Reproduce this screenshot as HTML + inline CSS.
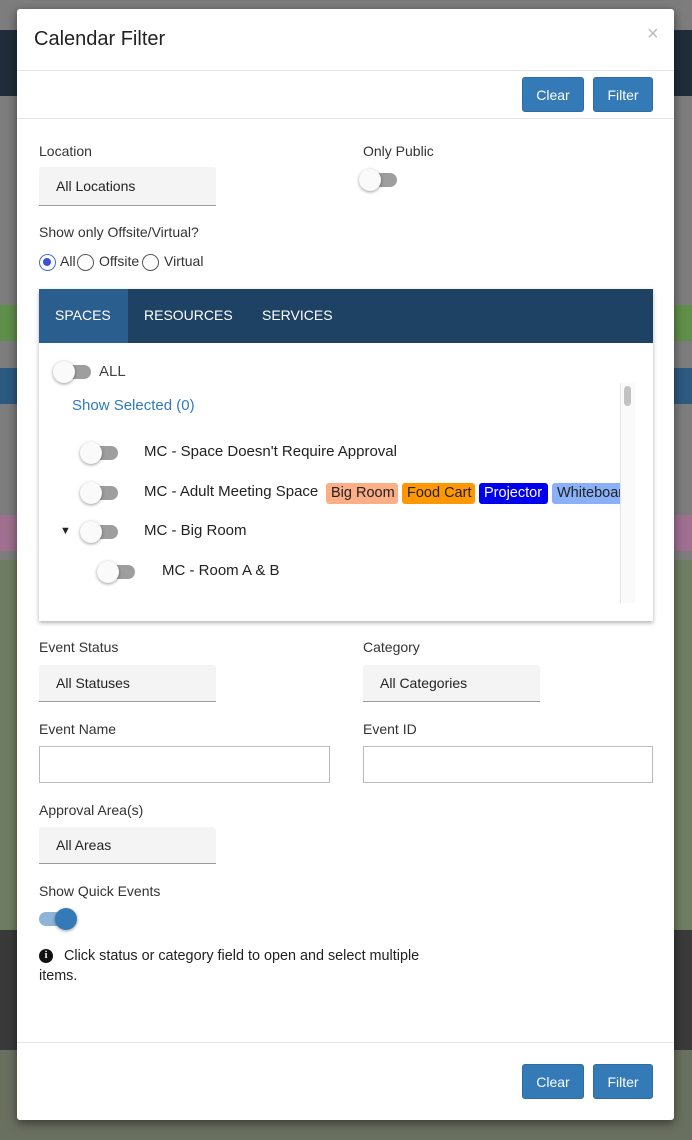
<!DOCTYPE html>
<html><head><meta charset="utf-8"><style>
*{box-sizing:border-box;margin:0;padding:0}
body{width:692px;height:1140px;overflow:hidden;background:#7d7d7d;font-family:"Liberation Sans",sans-serif;position:relative;color:#222}
.a{position:absolute}
.modal{position:absolute;left:17px;top:9px;width:657px;height:1111px;background:#fff;border-radius:3px;box-shadow:0 3px 10px rgba(0,0,0,.5)}
.lbl{position:absolute;font-size:14px;color:#333}
.sel{position:absolute;background:#f4f4f4;border-bottom:1px solid #999;font-size:14px;color:#222;padding-left:17px;display:flex;align-items:center;border-radius:3px 3px 0 0}
.btn{position:absolute;background:#337ab7;color:#fff;font-size:14px;border:1px solid #2e6da4;border-radius:3px;display:flex;align-items:center;justify-content:center}
.tg{position:absolute;width:38px;height:24px}
.tg .tr{position:absolute;left:6px;top:5px;width:32px;height:14px;border-radius:7px;background:#9e9e9e}
.tg .kn{position:absolute;left:0;top:1px;width:22px;height:22px;border-radius:50%;background:#fafafa;box-shadow:0 1px 3px rgba(0,0,0,.4)}
.row{position:absolute;font-size:15px;color:#222}
.tag{position:absolute;top:483px;height:21px;font-size:14.5px;border-radius:3px;padding:2px 5px;line-height:17px;white-space:nowrap;overflow:hidden}
.inp{position:absolute;border:1px solid #bbb;height:37px}
.radio{position:absolute;width:17px;height:17px;border-radius:50%;border:1.5px solid #555;top:254px}
</style></head><body>
<div class="a" style="left:0;top:30px;width:692px;height:66px;background:#1f2d3a"></div>
<div class="a" style="left:0;top:305px;width:692px;height:36px;background:#5f8f4a"></div>
<div class="a" style="left:0;top:368px;width:692px;height:36px;background:#2d5a80"></div>
<div class="a" style="left:0;top:515px;width:692px;height:36px;background:#a07090"></div>
<div class="a" style="left:0;top:560px;width:692px;height:370px;background:#6f7e62"></div>
<div class="a" style="left:0;top:930px;width:692px;height:120px;background:#3a3a3a"></div>
<div class="a" style="left:0;top:1050px;width:692px;height:90px;background:#6a7060"></div>
<div class="modal">
<div class="a" style="left:17px;top:19px;font-size:20px;color:#222">Calendar Filter</div>
<div class="a" style="left:630px;top:14px;font-size:20px;color:#bbb">×</div>
<div class="a" style="left:0;top:61px;width:657px;height:1px;background:#e5e5e5"></div>
<div class="btn" style="left:505px;top:68px;width:62px;height:35px">Clear</div>
<div class="btn" style="left:576px;top:68px;width:60px;height:35px">Filter</div>
<div class="a" style="left:0;top:109px;width:657px;height:1px;background:#e5e5e5"></div>
</div>
<div class="lbl" style="left:39px;top:143px">Location</div>
<div class="sel" style="left:39px;top:167px;width:177px;height:39px">All Locations</div>
<div class="lbl" style="left:363px;top:143px">Only Public</div>
<div class="tg" style="left:359px;top:168px"><div class="tr"></div><div class="kn"></div></div>
<div class="lbl" style="left:39px;top:224px">Show only Offsite/Virtual?</div>
<div class="radio" style="left:39px;border-color:#3f6fd0"><div class="a" style="left:3px;top:3px;width:8px;height:8px;border-radius:50%;background:#3f51d0"></div></div>
<div class="lbl" style="left:60px;top:253px">All</div>
<div class="radio" style="left:77px"></div>
<div class="lbl" style="left:99px;top:253px">Offsite</div>
<div class="radio" style="left:142px"></div>
<div class="lbl" style="left:164px;top:253px">Virtual</div>
<div class="a" style="left:39px;top:289px;width:614px;height:332px;background:#fff;box-shadow:0 2px 4px rgba(0,0,0,.3)"></div>
<div class="a" style="left:39px;top:289px;width:614px;height:54px;background:#1d4263"></div>
<div class="a" style="left:39px;top:289px;width:89px;height:54px;background:#2a5e8e"></div>
<div class="a" style="left:55px;top:307px;font-size:14px;color:#fff">SPACES</div>
<div class="a" style="left:144px;top:307px;font-size:14px;color:#fff">RESOURCES</div>
<div class="a" style="left:262px;top:307px;font-size:14px;color:#fff">SERVICES</div>
<div class="tg" style="left:53px;top:360px"><div class="tr"></div><div class="kn"></div></div>
<div class="row" style="left:99px;top:363px;color:#444">ALL</div>
<div class="a" style="left:620px;top:383px;width:15px;height:220px;border-left:1px solid #e5e5e5;background:#fafafa"></div>
<div class="a" style="left:624px;top:386px;width:7px;height:20px;border-radius:4px;background:#c2c2c2"></div>
<div class="row" style="left:72px;top:397px;color:#2f7ac0">Show Selected (0)</div>
<div class="tg" style="left:80px;top:441px"><div class="tr"></div><div class="kn"></div></div>
<div class="row" style="left:144px;top:443px">MC - Space Doesn't Require Approval</div>
<div class="tg" style="left:80px;top:481px"><div class="tr"></div><div class="kn"></div></div>
<div class="row" style="left:144px;top:483px">MC - Adult Meeting Space</div>
<div class="tag" style="left:326px;width:72px;background:#fcae86">Big Room</div>
<div class="tag" style="left:402px;width:73px;background:#ff9800">Food Cart</div>
<div class="tag" style="left:479px;width:69px;background:#0000ee;color:#fff">Projector</div>
<div class="tag" style="left:552px;width:68px;background:#8ab0f8;border-radius:3px 0 0 3px">Whiteboard</div>
<div class="a" style="left:60px;top:525px;font-size:11px">▼</div>
<div class="tg" style="left:80px;top:520px"><div class="tr"></div><div class="kn"></div></div>
<div class="row" style="left:144px;top:522px">MC - Big Room</div>
<div class="tg" style="left:97px;top:560px"><div class="tr"></div><div class="kn"></div></div>
<div class="row" style="left:162px;top:562px">MC - Room A &amp; B</div>
<div class="lbl" style="left:39px;top:639px">Event Status</div>
<div class="sel" style="left:39px;top:665px;width:177px;height:37px">All Statuses</div>
<div class="lbl" style="left:363px;top:639px">Category</div>
<div class="sel" style="left:363px;top:665px;width:177px;height:37px">All Categories</div>
<div class="lbl" style="left:39px;top:721px">Event Name</div>
<div class="inp" style="left:39px;top:746px;width:291px"></div>
<div class="lbl" style="left:363px;top:721px">Event ID</div>
<div class="inp" style="left:363px;top:746px;width:290px"></div>
<div class="lbl" style="left:39px;top:802px">Approval Area(s)</div>
<div class="sel" style="left:39px;top:827px;width:177px;height:37px">All Areas</div>
<div class="lbl" style="left:39px;top:883px">Show Quick Events</div>
<div class="a" style="left:39px;top:912px;width:34px;height:14px;border-radius:7px;background:#8fb3d9"></div>
<div class="a" style="left:55px;top:908px;width:22px;height:22px;border-radius:50%;background:#337ab7;box-shadow:0 1px 3px rgba(0,0,0,.4)"></div>
<div class="a" style="left:39px;top:949px;width:14px;height:14px;border-radius:50%;background:#111;color:#fff;font-size:10px;font-weight:bold;text-align:center;line-height:14px;font-family:'Liberation Serif',serif">i</div>
<div class="lbl" style="left:64px;top:948px;color:#222;font-size:14.4px">Click status or category field to open and select multiple</div>
<div class="lbl" style="left:39px;top:968px;color:#222;font-size:14.4px">items.</div>
<div class="a" style="left:17px;top:1042px;width:657px;height:1px;background:#e5e5e5"></div>
<div class="btn" style="left:522px;top:1064px;width:62px;height:35px">Clear</div>
<div class="btn" style="left:593px;top:1064px;width:60px;height:35px">Filter</div>
</body></html>
